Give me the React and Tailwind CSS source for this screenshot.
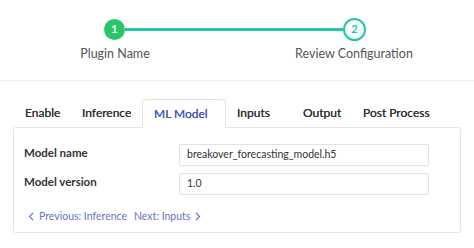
export default function App() {
  const tabs = [
    { label: 'Enable', w: 'w-[57px]' },
    { label: 'Inference', w: 'w-[71px]' },
    { label: 'ML Model', w: 'w-[84px]', active: true },
    { label: 'Inputs', w: 'w-[66px]' },
    { label: 'Output', w: 'w-[60px]' },
    { label: 'Post Process', w: 'w-[85px]' },
  ];

  return (
    <div className="w-[474px] h-[248px] bg-white overflow-hidden" style={{ fontFamily: 'Lato, "Noto Sans", sans-serif' }}>
      {/* stepper */}
      <div className="h-[81px] border-b border-[#f2f2f2] shadow-[0_1px_2px_rgba(0,0,0,0.02)]">
        <div className="flex items-center pl-[104px] pt-[18px]">
          <div className="w-[21px] h-[21px] rounded-full bg-[#2cc66a] text-white text-[11px] font-bold flex items-center justify-center">1</div>
          <div className="w-[218px] h-[3px] bg-[#22c7a9]"></div>
          <div className="w-[23px] h-[23px] rounded-full border-2 border-[#22c7a9] bg-white text-[#22c7a9] text-[11px] font-bold flex items-center justify-center">2</div>
        </div>
        <div className="flex mt-[4px] text-[12.5px] leading-[18px] text-[#555]">
          <div className="w-[140px] ml-[45px] text-center">Plugin Name</div>
          <div className="w-[160px] ml-[89px] text-center">Review Configuration</div>
        </div>
      </div>

      {/* tabs */}
      <div className="pt-[18px]">
        <div className="flex pl-[14px] h-[28px] relative z-10">
          {tabs.map((t) => (
            <div
              key={t.label}
              className={
                t.active
                  ? `${t.w} pl-[11px] flex items-center text-[12px] text-[#4757b5] bg-white border border-b-0 border-[#e4e4e4] rounded-t-[3px] h-[29px] [text-shadow:0_0_0.4px_currentColor]`
                  : `${t.w} pl-[11px] flex items-center text-[12px] text-[#333] [text-shadow:0_0_0.4px_currentColor]`
              }
            >
              {t.label}
            </div>
          ))}
        </div>
        <div className="ml-[13px] w-[448px] h-[106px] border border-[#e4e4e4] rounded-[3px] bg-white px-[10px] pt-[16px]">
          <div className="flex items-center h-[22px]">
            <div className="w-[155px] mb-[5px] text-[11.5px] font-bold text-[#333]">Model name</div>
            <div className="w-[250px] h-[22px] border border-[#e2e2e2] rounded-[2px] pl-[7px] flex items-center text-[10.5px] text-[#333]">breakover_forecasting_model.h5</div>
          </div>
          <div className="flex items-center h-[22px] mt-[7px]">
            <div className="w-[155px] mb-[5px] text-[11.5px] font-bold text-[#333]">Model version</div>
            <div className="w-[250px] h-[22px] border border-[#e2e2e2] rounded-[2px] pl-[7px] flex items-center text-[10.5px] text-[#333]">1.0</div>
          </div>
          <div className="flex items-center mt-[14px] pl-[4px] text-[10.5px] text-[#6872c4] gap-[7px]">
            <span className="flex items-center gap-[5px]">
              <svg width="6" height="9" viewBox="0 0 6 9" fill="none" stroke="currentColor" strokeWidth="1.1"><path d="M5 1 1.5 4.5 5 8" /></svg>
              Previous: Inference
            </span>
            <span className="flex items-center gap-[5px]">
              Next: Inputs
              <svg width="6" height="9" viewBox="0 0 6 9" fill="none" stroke="currentColor" strokeWidth="1.1"><path d="M1 1 4.5 4.5 1 8" /></svg>
            </span>
          </div>
        </div>
      </div>
    </div>
  );
}
